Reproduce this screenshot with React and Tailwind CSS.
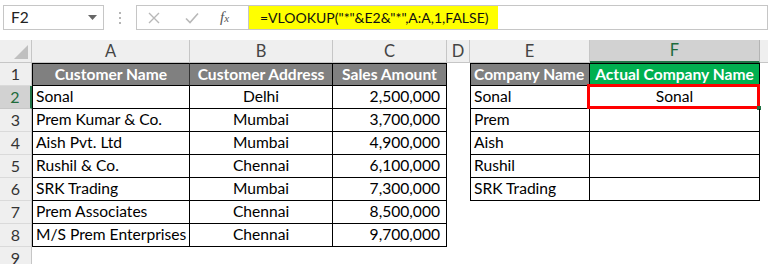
import React from "react";

const COLS = [158, 143, 114, 23, 120, 170];
const LETTERS = ["A", "B", "C", "D", "E", "F"];

const customers = [
    ["Sonal", "Delhi", "2,500,000"],
    ["Prem Kumar & Co.", "Mumbai", "3,700,000"],
    ["Aish Pvt. Ltd", "Mumbai", "4,900,000"],
    ["Rushil & Co.", "Chennai", "6,100,000"],
    ["SRK Trading", "Mumbai", "7,300,000"],
    ["Prem Associates", "Chennai", "8,500,000"],
    ["M/S Prem Enterprises", "Chennai", "9,700,000"],
];

const companies = ["Sonal", "Prem", "Aish", "Rushil", "SRK Trading"];

function RowHead({ n, active }) {
    return (
        <div
            className={`w-[32px] shrink-0 h-full flex items-center justify-center border-r border-b text-[16px] ${
                active
                    ? "bg-[#d2d2d2] text-[#1e6b3c] border-r-[#217346] border-r-2 border-b-[#c6c6c6]"
                    : "bg-[#efefef] text-[#333] border-r-[#c6c6c6] border-b-[#dadada]"
            }`}
        >
            {n}
        </div>
    );
}

function FormulaBar() {
    return (
        <div className="h-[40px] flex items-start pt-[5px] bg-white">
            {/* Name box */}
            <div className="ml-[3px] w-[101px] h-[25px] border border-[#c6c6c6] flex items-center justify-between pl-[7px] pr-[6px] text-[15.5px] text-[#222]">
                <span>F2</span>
                <svg width="9" height="5" viewBox="0 0 9 5">
                    <path d="M0 0h9L4.5 5z" fill="#666" />
                </svg>
            </div>
            {/* grip dots */}
            <div className="w-[32px] h-[25px] flex flex-col items-center justify-center gap-[3px]">
                <span className="w-[2px] h-[2px] bg-[#b5b5b5]" />
                <span className="w-[2px] h-[2px] bg-[#b5b5b5]" />
                <span className="w-[2px] h-[2px] bg-[#b5b5b5]" />
            </div>
            {/* Cancel / enter / fx */}
            <div className="w-[112px] h-[25px] border border-[#c6c6c6] border-r-0 flex items-center">
                <svg className="ml-[11px]" width="12" height="12" viewBox="0 0 12 12">
                    <path d="M1 1l10 10M11 1L1 11" stroke="#b8b8b8" strokeWidth="1.4" fill="none" />
                </svg>
                <svg className="ml-[25px]" width="14" height="12" viewBox="0 0 14 12">
                    <path d="M1 6.5l4 4L13 1.5" stroke="#b8b8b8" strokeWidth="1.6" fill="none" />
                </svg>
                <span className="ml-[21px] text-[15px] italic text-[#555] font-['Liberation_Serif',serif] leading-none">
                    f<span className="text-[11px]">x</span>
                </span>
            </div>
            {/* Formula input */}
            <div className="flex-1 h-[25px] border border-[#c6c6c6] flex items-stretch">
                <div className="bg-[#ffff00] w-[249px] flex items-center pl-[11px] text-[14px] text-[#111] whitespace-nowrap">
                    =VLOOKUP("*"&amp;E2&amp;"*",A:A,1,FALSE)
                </div>
            </div>
        </div>
    );
}

function ColumnHeaders() {
    return (
        <div className="h-[23px] flex">
            <div className="w-[32px] shrink-0 bg-[#efefef] border-r border-b border-[#c6c6c6] relative">
                <svg className="absolute right-[3px] bottom-[3px]" width="14" height="14" viewBox="0 0 14 14">
                    <path d="M14 0V14H0z" fill="#c0c0c0" />
                </svg>
            </div>
            {COLS.map((w, i) => (
                <div
                    key={i}
                    style={{ width: w }}
                    className={`shrink-0 flex items-center justify-center border-r text-[16.5px] ${
                        LETTERS[i] === "F"
                            ? "bg-[#d2d2d2] text-[#1e6b3c] border-r-[#b4b4b4] border-b-2 border-b-[#217346]"
                            : "bg-[#efefef] text-[#444] border-r-[#c6c6c6] border-b border-b-[#c6c6c6]"
                    }`}
                >
                    {LETTERS[i]}
                </div>
            ))}
            <div className="flex-1 bg-[#efefef] border-b border-[#c6c6c6]" />
        </div>
    );
}

export default function App() {
    return (
        <div className="w-[768px] h-[264px] overflow-hidden bg-white font-['Lato','Noto_Sans',sans-serif] leading-none">
            <FormulaBar />
            <ColumnHeaders />

            {/* Row 1 - headers */}
            <div className="h-[23px] flex">
                <RowHead n={1} />
                <div className="w-[158px] shrink-0 bg-[#808080] border border-black border-r-[#333] flex items-center justify-center text-white font-bold text-[15.6px]">
                    Customer Name
                </div>
                <div className="w-[143px] shrink-0 bg-[#808080] border-y border-r border-black flex items-center justify-center text-white font-bold text-[15.6px] whitespace-nowrap">
                    Customer Address
                </div>
                <div className="w-[114px] shrink-0 bg-[#808080] border-y border-r border-black flex items-center justify-center text-white font-bold text-[15.6px] whitespace-nowrap">
                    Sales Amount
                </div>
                <div className="w-[23px] shrink-0" />
                <div className="w-[120px] shrink-0 bg-[#808080] border border-black flex items-center pl-[3px] text-white font-bold text-[15.6px] whitespace-nowrap">
                    Company Name
                </div>
                <div className="w-[170px] shrink-0 bg-[#00b050] border-y border-r border-black flex items-center justify-center text-white font-bold text-[15.6px] whitespace-nowrap">
                    Actual Company Name
                </div>
                <div className="flex-1" />
            </div>

            {/* Rows 2-8 */}
            {customers.map((c, i) => {
                const company = companies[i];
                const hasCompany = i < companies.length;
                return (
                    <div key={i} className="h-[23px] flex">
                        <RowHead n={i + 2} active={i === 0} />
                        <div className="w-[158px] shrink-0 border-x border-b border-black flex items-center pl-[3px] text-[15.6px] text-black whitespace-nowrap">
                            {c[0]}
                        </div>
                        <div className="w-[143px] shrink-0 border-r border-b border-black flex items-center justify-center text-[15.6px] text-black">
                            {c[1]}
                        </div>
                        <div className="w-[114px] shrink-0 border-r border-b border-black flex items-center justify-end pr-[6px] text-[15.6px] text-black">
                            {c[2]}
                        </div>
                        <div className="w-[23px] shrink-0" />
                        {hasCompany ? (
                            <>
                                <div className="w-[120px] shrink-0 border-x border-b border-black flex items-center pl-[3px] text-[15.6px] text-black whitespace-nowrap">
                                    {company}
                                </div>
                                <div className="w-[170px] shrink-0 border-r border-b border-black flex items-center justify-center text-[15.6px] text-black relative">
                                    {i === 0 && (
                                        <>
                                            <span>Sonal</span>
                                            <div className="absolute left-[-3px] top-[-2px] right-[-1px] bottom-[-1px] border-[3px] border-[#ff0000]" />
                                            <div className="absolute right-[-2px] bottom-[-2px] w-[4px] h-[4px] bg-[#217346]" />
                                        </>
                                    )}
                                </div>
                            </>
                        ) : (
                            <div className="w-[290px] shrink-0" />
                        )}
                        <div className="flex-1" />
                    </div>
                );
            })}

            {/* Row 9 */}
            <div className="h-[23px] flex">
                <RowHead n={9} />
                <div className="flex-1" />
            </div>
        </div>
    );
}
